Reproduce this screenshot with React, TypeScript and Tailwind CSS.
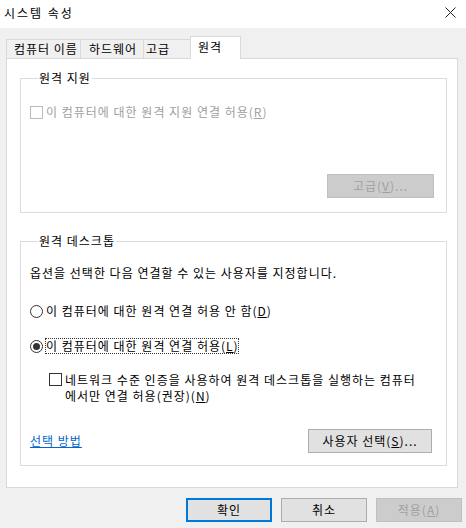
const font = "font-['Malgun_Gothic','Noto_Sans_CJK_KR',sans-serif]";

const Radio = ({ checked }: { checked?: boolean }) => (
  <span className="flex h-[13px] w-[13px] shrink-0 items-center justify-center rounded-full border border-[#333333] bg-white">
    {checked && <span className="h-[7px] w-[7px] rounded-full bg-[#333333]" />}
  </span>
);

const Check = ({ disabled }: { disabled?: boolean }) => (
  <span
    className={
      disabled
        ? "block h-[13px] w-[13px] shrink-0 border border-[#bcbcbc] bg-white"
        : "block h-[13px] w-[13px] shrink-0 border border-[#333333] bg-white"
    }
  />
);

export default function App() {
  return (
    <div className={`${font} flex h-[528px] w-[466px] flex-col bg-[#f0f0f0] text-[12px] leading-[16px] tracking-[1px] text-black`}>
      {/* title bar */}
      <div className="flex h-[28px] items-center justify-between bg-white pl-[4px] pr-[8px]">
        <span className="-mt-[3px] tracking-[2px]">시스템 속성</span>
        <svg width="11" height="11" viewBox="0 0 11 11" className="-mt-[3px] mr-[2px]">
          <path d="M0.5 0.5 L10.5 10.5 M10.5 0.5 L0.5 10.5" stroke="#222" strokeWidth="1" />
        </svg>
      </div>

      {/* tabs */}
      <div className="mt-[8px] flex items-end pl-[6px]">
        <div className="flex h-[19px] w-[75px] items-center border border-b-0 border-[#d9d9d9] bg-[#f0f0f0] pl-[7px]">
          컴퓨터 이름
        </div>
        <div className="-ml-[1px] flex h-[19px] w-[64px] items-center border border-b-0 border-[#d9d9d9] bg-[#f0f0f0] pl-[8px]">
          하드웨어
        </div>
        <div className="-ml-[1px] flex h-[19px] w-[48px] items-center border border-b-0 border-[#d9d9d9] bg-[#f0f0f0] pl-[2px]">
          고급
        </div>
        <div className="relative -mb-px -ml-[1px] flex h-[23px] w-[51px] items-start border border-b-0 border-[#d9d9d9] bg-white pl-[7px] pt-[2px]">
          원격
        </div>
      </div>

      {/* tab panel */}
      <div className="ml-[6px] flex h-[430px] w-[452px] flex-col border border-[#d9d9d9] bg-white pl-[13px] pt-[11px]">
        <fieldset className="flex h-[143px] w-[427px] flex-col border border-[#dcdcdc] pl-[9px] pr-[12px]">
          <legend className="ml-[8px] px-[1px]">원격 지원</legend>
          <div className="mt-[18px] flex items-center gap-[3px] text-[#a0a0a0]">
            <Check disabled />
            <span>
              이 컴퓨터에 대한 원격 지원 연결 허용(<span className="underline">R</span>)
            </span>
          </div>
          <div className="mt-[54px] flex justify-end">
            <div className="flex h-[24px] w-[107px] items-center justify-center border border-[#bfbfbf] bg-[#cccccc] text-[#a0a0a0]">
              고급(<span className="underline">V</span>)...
            </div>
          </div>
        </fieldset>

        <fieldset className="mt-[20px] flex h-[233px] w-[427px] flex-col border border-[#dcdcdc] pl-[9px] pr-[14px]">
          <legend className="ml-[8px] px-[1px]">원격 데스크톱</legend>
          <div className="mt-[16px]">옵션을 선택한 다음 연결할 수 있는 사용자를 지정합니다.</div>
          <div className="mt-[22px] flex items-center gap-[3px]">
            <Radio />
            <span>
              이 컴퓨터에 대한 원격 연결 허용 안 함(<span className="underline">D</span>)
            </span>
          </div>
          <div className="mt-[19px] flex items-center gap-[2px]">
            <Radio checked />
            <span className="pl-[1px] outline-1 -outline-offset-1 outline-[#333] outline-dotted">
              이 컴퓨터에 대한 원격 연결 허용(<span className="underline">L</span>)
            </span>
          </div>
          <div className="mt-[18px] flex items-start gap-[3px] pl-[19px]">
            <span className="mt-[1px]">
              <Check />
            </span>
            <span>
              네트워크 수준 인증을 사용하여 원격 데스크톱을 실행하는 컴퓨터
              <br />
              에서만 연결 허용(권장)(<span className="underline">N</span>)
            </span>
          </div>
          <div className="mt-[25px] flex items-center justify-between">
            <span className="text-[#0066cc] underline">선택 방법</span>
            <div className="flex h-[24px] w-[124px] items-center justify-center border border-[#adadad] bg-[#e1e1e1]">
              사용자 선택(<span className="underline">S</span>)...
            </div>
          </div>
        </fieldset>
      </div>

      {/* dialog buttons */}
      <div className="mt-[10px] flex gap-[9px] pl-[186px]">
        <div className="flex h-[24px] w-[86px] items-center justify-center border-2 border-[#0078d7] bg-[#e1e1e1]">확인</div>
        <div className="flex h-[24px] w-[86px] items-center justify-center border border-[#adadad] bg-[#e1e1e1]">취소</div>
        <div className="flex h-[24px] w-[86px] items-center justify-center border border-[#bfbfbf] bg-[#cccccc] text-[#a0a0a0]">
          적용(<span className="underline">A</span>)
        </div>
      </div>
    </div>
  );
}
